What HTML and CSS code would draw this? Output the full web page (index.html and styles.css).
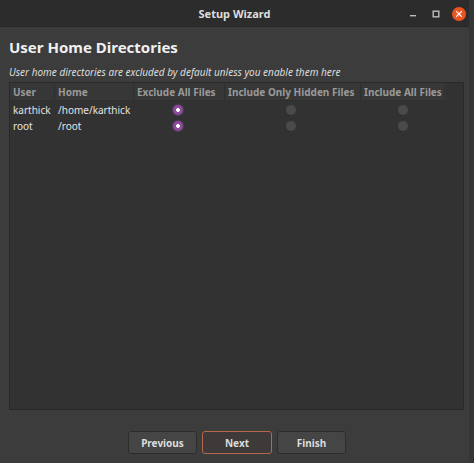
FILE: index.html
```html
<!DOCTYPE html>
<html>
<head>
<meta charset="utf-8">
<link rel="stylesheet" href="styles.css">
</head>
<body>
<div class="window">
  <div class="titlebar">
    <div class="title">Setup Wizard</div>
    <div class="controls">
      <span class="ctl min"><svg width="8" height="8" viewBox="0 0 8 8"><rect x="1" y="5" width="6" height="1.4" fill="#bdbdbd"/></svg></span>
      <span class="ctl max"><svg width="8" height="8" viewBox="0 0 8 8"><rect x="1.2" y="1.2" width="5.6" height="5.6" fill="none" stroke="#bdbdbd" stroke-width="1.4"/></svg></span>
      <span class="ctl close"><svg width="14" height="14" viewBox="0 0 14 14"><circle cx="7" cy="7" r="7" fill="#e95420"/><path d="M4.6 4.6 L9.4 9.4 M9.4 4.6 L4.6 9.4" stroke="#fff" stroke-width="1.3" stroke-linecap="round"/></svg></span>
    </div>
  </div>
  <div class="content">
    <h1 class="heading">User Home Directories</h1>
    <p class="subtitle">User home directories are excluded by default unless you enable them here</p>
    <div class="table">
      <div class="row head">
        <div class="c user">User</div>
        <div class="c home">Home</div>
        <div class="c ex">Exclude All Files</div>
        <div class="c hid">Include Only Hidden Files</div>
        <div class="c all">Include All Files</div>
      </div>
      <div class="row">
        <div class="c user">karthick</div>
        <div class="c home">/home/karthick</div>
        <div class="c ex"><span class="radio on"></span></div>
        <div class="c hid"><span class="radio"></span></div>
        <div class="c all"><span class="radio"></span></div>
      </div>
      <div class="row">
        <div class="c user">root</div>
        <div class="c home">/root</div>
        <div class="c ex"><span class="radio on"></span></div>
        <div class="c hid"><span class="radio"></span></div>
        <div class="c all"><span class="radio"></span></div>
      </div>
    </div>
    <div class="buttons">
      <button class="btn">Previous</button>
      <button class="btn focus">Next</button>
      <button class="btn">Finish</button>
    </div>
  </div>
</div>
</body>
</html>
```

FILE: styles.css
```css
* { box-sizing: border-box; }
html, body { margin: 0; padding: 0; }
body {
  width: 474px;
  height: 463px;
  background: #3c3c3c;
  font-family: "Noto Sans", "Open Sans", sans-serif;
  color: #dfdfdf;
  overflow: hidden;
}
.window {
  height: 463px;
  display: flex;
  flex-direction: column;
  border-right: 5px solid #353535;
}
.titlebar {
  height: 27px;
  background: #2c2c2c;
  border-bottom: 1px solid #262626;
  display: flex;
  align-items: center;
  justify-content: center;
  position: relative;
}
.title {
  font-size: 11px;
  font-weight: 700;
  color: #dedede;
}
.controls {
  position: absolute;
  right: 2px;
  top: 0;
  height: 27px;
  display: flex;
  align-items: center;
  gap: 7px;
}
.ctl {
  width: 16px;
  height: 16px;
  display: flex;
  align-items: center;
  justify-content: center;
}
.content {
  flex: 1;
  display: flex;
  flex-direction: column;
  padding: 9px 5px 0 9px;
}
.heading {
  margin: 1px 0 0 0;
  font-size: 15px;
  font-weight: 700;
  color: #f0f0f0;
  line-height: 20px;
}
.subtitle {
  margin: 9px 0 0 0;
  font-size: 10px;
  font-style: italic;
  color: #dcdcdc;
  line-height: 12px;
}
.table {
  margin-top: 4px;
  height: 328px;
  background: #323232;
  border: 1px solid #2a2a2a;
  font-size: 10px;
}
.row {
  display: grid;
  grid-template-columns: 45px 79px 91px 136px 84px;
  height: 16px;
  align-items: center;
}
.row.head {
  height: 18px;
  width: 436px;
  background: #373737;
  border-bottom: 1px solid #2f2f2f;
  color: #9a9a9a;
  font-weight: 700;
}
.row.head .c { border-right: 1px solid #2f2f2f; height: 18px; line-height: 19px; }
.c { padding-left: 3px; white-space: nowrap; color: inherit; }
.row:not(.head) .c { color: #e2e2e2; }
.row:not(.head) .c.ex, .row:not(.head) .c.hid, .row:not(.head) .c.all {
  display: flex;
  justify-content: center;
  padding-left: 0;
}
.row:not(.head) .c.ex, .row:not(.head) .c.hid { padding-right: 4px; }
.row.head + .row { margin-top: 1px; }
.radio {
  width: 10px;
  height: 10px;
  border-radius: 50%;
  background: #4a4a4a;
  display: block;
}
.radio.on {
  background: radial-gradient(circle, #ffffff 0 1.6px, #8e4a9c 2.2px);
  box-shadow: 0 0 2px #a05ab0;
}
.buttons {
  display: flex;
  justify-content: center;
  gap: 5px;
  margin-top: 21px;
  padding-left: 1px;
}
.btn {
  height: 23px;
  width: 69px;
  background: #454545;
  border: 1px solid #2c2c2c;
  border-radius: 3px;
  color: #dcdcdc;
  font-family: inherit;
  font-size: 10px;
  font-weight: 700;
  padding: 0;
}
.btn.focus {
  width: 70px;
  border: 1px solid #b5684a;
  background: #3d3a39;
}
```
